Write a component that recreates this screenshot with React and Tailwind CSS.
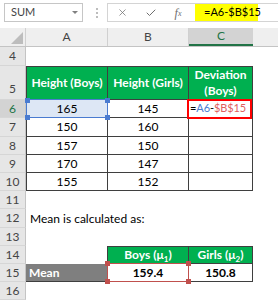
import { X, Check } from "lucide-react";

const line = "border-[#3f3f3f]";

function RowHead({ n, active, tall }) {
  return (
    <div
      className={`w-[26px] shrink-0 h-full flex justify-center border-r border-b border-r-[#c4c4c4] border-b-[#d6d6d6] text-[12px] ${
        tall ? "items-end pb-[1px]" : "items-center"
      } ${active ? "bg-[#d3d3d3] text-[#217346]" : "bg-[#e6e6e6] text-[#444]"}`}
    >
      {n}
    </div>
  );
}

function Handle({ pos, color }) {
  return <span className={`absolute w-[5px] h-[5px] ${pos} ${color}`} />;
}

export default function App() {
  return (
    <div className="w-[278px] h-[300px] overflow-hidden bg-white font-['Lato',sans-serif] text-[12px] text-black">
      {/* formula bar */}
      <div className="h-[28px] flex items-start pt-[3px] bg-white">
        <div className="ml-[4px] w-[79px] h-[19px] border border-[#c6c6c6] flex items-center justify-between pl-[6px] pr-[4px] text-[11px] text-[#444]">
          <span>SUM</span>
          <span className="w-0 h-0 border-l-[3px] border-r-[3px] border-t-[3px] border-l-transparent border-r-transparent border-t-[#808080]" />
        </div>
        <div className="ml-[13px] mt-[5px] flex flex-col gap-[2px]">
          <span className="w-[2px] h-[2px] bg-[#bdbdbd]" />
          <span className="w-[2px] h-[2px] bg-[#bdbdbd]" />
          <span className="w-[2px] h-[2px] bg-[#bdbdbd]" />
        </div>
        <div className="ml-[9px] flex-1 h-[19px] border border-r-0 border-[#d4d4d4] flex items-center">
          <div className="w-[28px] flex justify-center text-[#6e6e6e]">
            <X size={11} strokeWidth={1.6} />
          </div>
          <div className="w-[29px] flex justify-center text-[#6e6e6e]">
            <Check size={12} strokeWidth={2} />
          </div>
          <div className="w-[26px] flex justify-center text-[#6e6e6e] font-['Liberation_Serif',serif] italic text-[12px]">
            f<span className="text-[8px] mt-[4px]">x</span>
          </div>
          <div className="ml-[4px] w-[63px] h-full bg-[#ffff00] flex items-center pl-[9px] text-[11px] text-black">
            =A6-$B$15
          </div>
        </div>
      </div>

      {/* column headers */}
      <div className="h-[19px] flex bg-[#efefef] border-b border-[#c4c4c4] text-[12px] text-[#444]">
        <div className="w-[26px] shrink-0 flex items-end justify-end pr-[2px] pb-[2px] border-r border-[#d0d0d0]">
          <span className="w-0 h-0 border-l-[12px] border-l-transparent border-b-[12px] border-b-[#bdbdbd]" />
        </div>
        <div className="w-[82px] shrink-0 flex items-center justify-center border-r border-[#d0d0d0]">A</div>
        <div className="w-[81px] shrink-0 flex items-center justify-center border-r border-[#d0d0d0]">B</div>
        <div className="w-[64px] shrink-0 flex items-center justify-center bg-[#d3d3d3] border-b-2 border-[#217346] text-[#217346]">C</div>
        <div className="flex-1" />
      </div>

      {/* row 4 */}
      <div className="h-[19px] flex">
        <RowHead n="4" />
      </div>

      {/* row 5 */}
      <div className="h-[34px] flex">
        <RowHead n="5" tall />
        <div className={`w-[82px] shrink-0 bg-[#00b050] border ${line} flex items-center justify-center text-white font-bold`}>
          Height (Boys)
        </div>
        <div className={`w-[81px] shrink-0 bg-[#00b050] border-t border-r border-b ${line} flex items-center justify-center text-white font-bold`}>
          Height (Girls)
        </div>
        <div className={`w-[64px] shrink-0 bg-[#00b050] border-t border-r border-b ${line} flex items-center justify-center text-center leading-[16px] text-white font-bold`}>
          Deviation (Boys)
        </div>
      </div>

      {/* row 6 */}
      <div className="h-[18px] flex">
        <RowHead n="6" active />
        <div className={`relative w-[82px] shrink-0 bg-[#dde7f5] border-l border-r border-b ${line} flex items-center justify-center`}>
          165
          <span className="absolute -left-[1px] -top-[1px] -right-[1px] -bottom-[1px] border border-[#4a7bd0]" />
          <Handle pos="-left-[2px] -top-[2px]" color="bg-[#4a7bd0]" />
          <Handle pos="-right-[3px] -top-[2px]" color="bg-[#4a7bd0]" />
          <Handle pos="-left-[2px] -bottom-[3px]" color="bg-[#4a7bd0]" />
          <Handle pos="-right-[3px] -bottom-[3px]" color="bg-[#4a7bd0]" />
        </div>
        <div className={`w-[81px] shrink-0 border-r border-b ${line} flex items-center justify-center`}>145</div>
        <div className={`relative w-[64px] shrink-0 border-r border-b ${line} flex items-center pl-[1px] text-[11px] tracking-[-0.1px] whitespace-nowrap`}>
          <span>=</span>
          <span className="text-[#4a7bd0]">A6</span>
          <span>-</span>
          <span className="text-[#e0605e]">$B$15</span>
          <span className="absolute -left-[2px] -top-[1px] right-0 -bottom-[2px] border-2 border-[#ff0000]" />
        </div>
      </div>

      {[
        ["7", "150", "160", "h-[19px]"],
        ["8", "157", "150", "h-[18px]"],
        ["9", "170", "147", "h-[18px]"],
        ["10", "155", "152", "h-[18px]"],
      ].map(([n, a, b, h]) => (
        <div key={n} className={`${h} flex`}>
          <RowHead n={n} />
          <div className={`w-[82px] shrink-0 border-l border-r border-b ${line} flex items-center justify-center`}>{a}</div>
          <div className={`w-[81px] shrink-0 border-r border-b ${line} flex items-center justify-center`}>{b}</div>
          <div className={`w-[64px] shrink-0 border-r border-b ${line}`} />
        </div>
      ))}

      <div className="h-[18px] flex">
        <RowHead n="11" />
      </div>

      <div className="h-[19px] flex">
        <RowHead n="12" />
        <div className="pl-[4px] flex items-center whitespace-nowrap">Mean is calculated as:</div>
      </div>

      <div className="h-[18px] flex">
        <RowHead n="13" />
      </div>

      {/* row 14 */}
      <div className="h-[18px] flex">
        <RowHead n="14" />
        <div className={`w-[82px] shrink-0 border-r ${line}`} />
        <div className={`w-[81px] shrink-0 bg-[#00b050] border-t border-r border-b ${line} flex items-center justify-center text-white font-bold`}>
          <span>
            Boys (μ<sub className="text-[8px] align-baseline relative top-[3px]">1</sub>)
          </span>
        </div>
        <div className={`w-[64px] shrink-0 bg-[#00b050] border-t border-r border-b ${line} flex items-center justify-center text-white font-bold`}>
          <span>
            Girls (μ<sub className="text-[8px] align-baseline relative top-[3px]">2</sub>)
          </span>
        </div>
      </div>

      {/* row 15 */}
      <div className="h-[18px] flex">
        <RowHead n="15" />
        <div className={`w-[82px] shrink-0 bg-[#7f7f7f] border-r border-b ${line} flex items-center pl-[3px] text-white font-bold`}>
          Mean
        </div>
        <div className={`relative w-[81px] shrink-0 border-r border-b ${line} flex items-center justify-center font-bold`}>
          159.4
          <span className="absolute -left-[1px] -top-[1px] -right-[1px] -bottom-[1px] border border-[#c0504d]" />
          <Handle pos="-left-[3px] -top-[3px]" color="bg-[#c0504d]" />
          <Handle pos="-right-[3px] -top-[3px]" color="bg-[#c0504d]" />
          <Handle pos="-left-[3px] -bottom-[3px]" color="bg-[#c0504d]" />
          <Handle pos="-right-[3px] -bottom-[3px]" color="bg-[#c0504d]" />
        </div>
        <div className={`w-[64px] shrink-0 border-r border-b ${line} flex items-center justify-center font-bold`}>150.8</div>
      </div>

      <div className="h-[18px] flex">
        <RowHead n="16" />
      </div>
    </div>
  );
}
